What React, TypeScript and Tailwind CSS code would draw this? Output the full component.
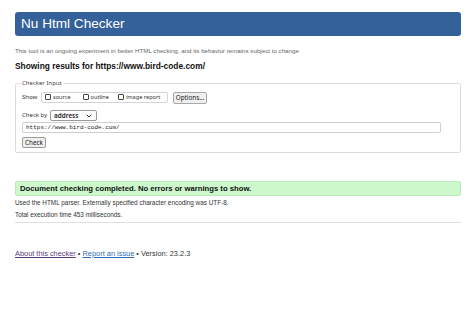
import React from "react";

function Box({ label, className }: { label: string; className?: string }) {
  return (
    <span className={"flex items-center " + (className ?? "")}>
      <span className="inline-block w-[6px] h-[6px] border border-[#444] rounded-[1px] bg-white" />
      <span className="ml-[2px]">{label}</span>
    </span>
  );
}

export default function App() {
  const ui = { fontFamily: '"Noto Sans", "Open Sans", sans-serif' } as React.CSSProperties;
  return (
    <div
      className="w-[474px] h-[316px] bg-white pl-[15px] pr-[13px] pt-[12px] overflow-hidden text-[#222]"
      style={{ fontFamily: '"Liberation Sans", Arial, sans-serif' }}
    >
      <div className="h-[24px] bg-[#35619b] rounded-[3px] text-white text-[13.6px] leading-[24px] pl-[6px]">
        Nu Html Checker
      </div>
      <p className="mt-[11px] text-[6.2px] leading-[8px] text-[#666]">
        This tool is an ongoing experiment in better HTML checking, and its behavior remains subject to change
      </p>
      <p className="mt-[6px] text-[8.4px] leading-[10px] font-bold text-[#111]">
        Showing results for https://www.bird-code.com/
      </p>
      <fieldset
        className="mt-[8px] border border-[#dcdcdc] rounded-[2px] pl-[6px] pb-[4px] text-[6px] text-[#333]"
        style={ui}
      >
        <legend className="leading-[8px] px-[1px] -ml-[1px] text-[#444]">Checker Input</legend>
        <div className="mt-[4px] h-[13px] flex items-center">
          <span className="w-[19px]">Show</span>
          <div className="h-[11px] w-[127px] border border-[#d4d4d4] rounded-[2px] flex items-center pl-[3px] text-[5.6px]">
            <Box label="source" />
            <Box label="outline" className="ml-[12px]" />
            <Box label="image report" className="ml-[9px]" />
          </div>
          <button className="ml-[5px] h-[12px] w-[34px] bg-[#efefef] border border-[#a8a8a8] rounded-[2px] text-[6.3px] leading-[10px] text-[#222]">
            Options...
          </button>
        </div>
        <div className="mt-[6px] h-[11px] flex items-center">
          <span className="w-[28px]">Check by</span>
          <div className="h-[11px] w-[47px] border border-[#9a9a9a] rounded-[2px] flex items-center pl-[3px] pr-[4px] justify-between bg-white">
            <span className="font-semibold text-[6.4px] text-[#222]">address</span>
            <svg width="6" height="4" viewBox="0 0 6 4">
              <path d="M0.7 0.7 L3 3 L5.3 0.7" fill="none" stroke="#333" strokeWidth="1" />
            </svg>
          </div>
        </div>
        <div
          className="mt-[1px] h-[11px] w-[419px] border border-[#cfcfcf] rounded-[2px] flex items-center pl-[3px] text-[6px] text-[#222]"
          style={{ fontFamily: '"Liberation Mono", "DejaVu Sans Mono", monospace' }}
        >
          https://www.bird-code.com/
        </div>
        <button className="mt-[4px] block h-[11px] w-[24px] bg-[#efefef] border border-[#9a9a9a] rounded-[2px] text-[6.3px] leading-[9px] text-[#222]">
          Check
        </button>
      </fieldset>
      <div className="mt-[28px] h-[15px] bg-[#ccf8cc] border border-[#bde8bd] rounded-[2px] pl-[4px] text-[7.7px] leading-[13px] font-bold text-[#111]">
        Document checking completed. No errors or warnings to show.
      </div>
      <p className="mt-[3px] text-[6.4px] leading-[8px] text-[#333]">
        Used the HTML parser. Externally specified character encoding was UTF-8.
      </p>
      <p className="mt-[4px] text-[6.4px] leading-[8px] text-[#333]">Total execution time 453 milliseconds.</p>
      <div className="mt-[3px] border-t border-[#e0e0e0]" />
      <p className="mt-[26px] text-[7.4px] leading-[10px] text-[#333]">
        <a className="underline text-[#5a3b7e]">About this checker</a> •{" "}
        <a className="underline text-[#2f6db5]">Report an issue</a> • Version: 23.2.3
      </p>
    </div>
  );
}
